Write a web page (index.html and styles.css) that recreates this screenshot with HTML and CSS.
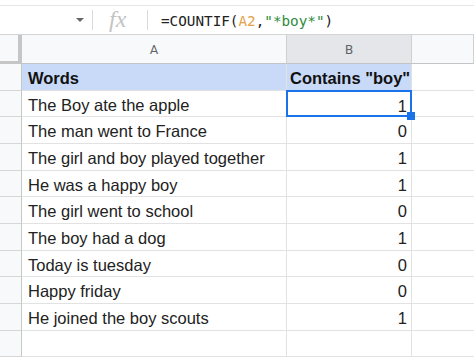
FILE: index.html
```html
<!DOCTYPE html>
<html lang="en">
<head>
    <meta charset="UTF-8">
    <title>COUNTIF boy</title>
    <link rel="stylesheet" href="styles.css">
</head>
<body>
    <div class="sheet">
        <!-- Formula bar -->
        <div class="formula-bar">
            <div class="name-box"><span class="caret"></span></div>
            <div class="fx">fx</div>
            <div class="formula">=COUNTIF(<span class="ref">A2</span>,<span class="str">"*boy*"</span>)</div>
        </div>

        <!-- Grid -->
        <div class="grid">
            <div class="corner"></div>
            <div class="col-head">A</div>
            <div class="col-head selected">B</div>
            <div class="col-head"></div>

            <div class="row-head"></div>
            <div class="cell head">Words</div>
            <div class="cell head">Contains "boy"</div>
            <div class="cell empty"></div>

            <div class="row-head"></div>
            <div class="cell">The Boy ate the apple</div>
            <div class="cell num active">1<span class="handle"></span></div>
            <div class="cell empty"></div>

            <div class="row-head"></div>
            <div class="cell">The man went to France</div>
            <div class="cell num">0</div>
            <div class="cell empty"></div>

            <div class="row-head"></div>
            <div class="cell">The girl and boy played together</div>
            <div class="cell num">1</div>
            <div class="cell empty"></div>

            <div class="row-head"></div>
            <div class="cell">He was a happy boy</div>
            <div class="cell num">1</div>
            <div class="cell empty"></div>

            <div class="row-head"></div>
            <div class="cell">The girl went to school</div>
            <div class="cell num">0</div>
            <div class="cell empty"></div>

            <div class="row-head"></div>
            <div class="cell">The boy had a dog</div>
            <div class="cell num">1</div>
            <div class="cell empty"></div>

            <div class="row-head"></div>
            <div class="cell">Today is tuesday</div>
            <div class="cell num">0</div>
            <div class="cell empty"></div>

            <div class="row-head"></div>
            <div class="cell">Happy friday</div>
            <div class="cell num">0</div>
            <div class="cell empty"></div>

            <div class="row-head"></div>
            <div class="cell">He joined the boy scouts</div>
            <div class="cell num">1</div>
            <div class="cell empty"></div>

            <div class="row-head"></div>
            <div class="cell"></div>
            <div class="cell"></div>
            <div class="cell empty"></div>
        </div>
    </div>
</body>
</html>
```

FILE: styles.css
```css
/* Reset */
* {
    box-sizing: border-box;
    margin: 0;
    padding: 0;
}

body {
    background: #fff;
    font-family: 'Liberation Sans', Arial, sans-serif;
    color: #222;
    overflow: hidden;
}

.sheet {
    width: 474px;
    height: 357px;
    padding-top: 5px;
    overflow: hidden;
}

/* Formula bar */
.formula-bar {
    display: flex;
    align-items: center;
    height: 30px;
    border-top: 1px solid #e6e6e6;
    border-bottom: 1px solid #d4d4d4;
}

.name-box {
    width: 93px;
    height: 20px;
    border-right: 1px solid #dadada;
    display: flex;
    align-items: center;
    justify-content: flex-end;
    padding-right: 8px;
}

.caret {
    width: 0;
    height: 0;
    border-left: 4px solid transparent;
    border-right: 4px solid transparent;
    border-top: 4px solid #666;
}

.fx {
    width: 55px;
    height: 20px;
    border-right: 1px solid #dadada;
    font-family: 'Liberation Serif', serif;
    font-style: italic;
    font-size: 24px;
    line-height: 18px;
    color: #c4c4c4;
    padding-left: 16px;
}

.formula {
    padding-left: 13px;
    font-family: 'DejaVu Sans Mono', 'Liberation Mono', monospace;
    font-size: 14.3px;
    color: #222;
    padding-top: 1px;
}

.formula .ref {
    color: #e5a247;
}

.formula .str {
    color: #2e8b3c;
}

/* Grid */
.grid {
    display: grid;
    grid-template-columns: 22px 265px 125px 62px;
    grid-template-rows: 29px repeat(11, 26.67px);
}

.corner {
    background: #f8f9fa;
    border-right: 4px solid #c6c6c6;
    border-bottom: 3px solid #c6c6c6;
}

.col-head {
    background: #f8f9fa;
    border-right: 1px solid #d0d0d0;
    border-bottom: 1px solid #c4c4c4;
    font-family: Roboto, sans-serif;
    font-size: 13px;
    color: #5f6368;
    display: flex;
    align-items: center;
    justify-content: center;
}

.col-head.selected {
    background: #e4e6e9;
}

.row-head {
    background: #f8f9fa;
    border-right: 1px solid #c6c6c6;
    border-bottom: 1px solid #d6d6d6;
}

.cell {
    position: relative;
    border-right: 1px solid #e2e2e2;
    border-bottom: 1px solid #e2e2e2;
    font-size: 16.5px;
    padding: 5px 0 0 6px;
    white-space: nowrap;
    overflow: visible;
}

.cell.head {
    background: #c9daf8;
    font-weight: bold;
    color: #111;
    padding-left: 6px;
}

.cell.head + .cell.head {
    padding-left: 3px;
}

.cell.num {
    text-align: right;
    padding-right: 4px;
}

.cell.empty {
    border-right: none;
}

/* Active cell */
.cell.active {
    z-index: 2;
    border: 2px solid #1a73e8;
    margin: -1px 0 0 -1px;
    padding-top: 5px;
    padding-right: 3px;
}

.handle {
    position: absolute;
    right: -5px;
    bottom: -5px;
    width: 8px;
    height: 8px;
    background: #1a73e8;
}
```
